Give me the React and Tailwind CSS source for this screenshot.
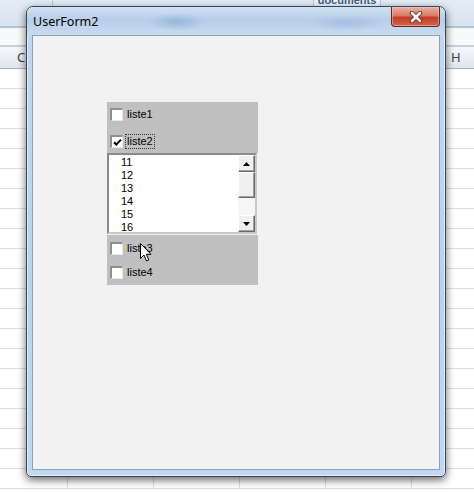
import React from "react";

function CheckBox({ checked }) {
  return (
    <div className="w-[13px] h-[13px] shrink-0 bg-white border-t-2 border-l-2 border-r border-b border-t-[#8f8f8f] border-l-[#8f8f8f] border-r-[#e6e6e6] border-b-[#e6e6e6] flex items-center justify-center">
      {checked && (
        <svg width="9" height="9" viewBox="0 0 9 9">
          <path d="M1 4.2 L3.3 6.6 L8 1.6" fill="none" stroke="#000" strokeWidth="2" />
        </svg>
      )}
    </div>
  );
}

function Opt({ label, checked, focus }) {
  return (
    <div className="flex items-center h-[13px]">
      <CheckBox checked={checked} />
      <span
        className={
          "ml-[2px] text-[11px] leading-[13px] text-black px-[1px] " +
          (focus ? "border border-dotted border-[#333]" : "border border-transparent")
        }
      >
        {label}
      </span>
    </div>
  );
}

function ScrollBtn({ up }) {
  return (
    <div className="h-[17px] w-full bg-[#f0f0f0] border border-t-white border-l-white border-r-[#696969] border-b-[#696969] shadow-[inset_-1px_-1px_0_#a0a0a0] flex items-center justify-center">
      <svg width="7" height="4" viewBox="0 0 7 4">
        {up ? <path d="M0 4 L3.5 0 L7 4 Z" fill="#000" /> : <path d="M0 0 L3.5 4 L7 0 Z" fill="#000" />}
      </svg>
    </div>
  );
}

export default function App() {
  const cols = [68, 86, 86, 86, 86, 86];
  const rows = Array.from({ length: 21 });
  const items = ["11", "12", "13", "14", "15", "16"];
  return (
    <div className="relative w-[474px] h-[492px] overflow-hidden bg-white font-['Liberation_Sans',Arial,sans-serif]">
      {/* Excel background */}
      <div className="flex flex-col w-full h-full">
        <div className="h-[28px] shrink-0 flex bg-[linear-gradient(180deg,#e4ecf6,#d9e4f1)] border-b-2 border-[#b3c4d8]">
          <div className="w-[53px] border-r border-[#b9c7d8]" />
          <div className="w-[260px]" />
          <div className="w-[68px] h-[12px] border-x border-b border-[#b9c7d8] bg-[#eef3f9] flex justify-center overflow-hidden">
            <span className="text-[11px] leading-[11px] -mt-[5px] text-[#3d5f8c] font-bold">documents</span>
          </div>
        </div>
        <div className="h-[19px] shrink-0 bg-[#f7f9fb] border-b-2 border-[#c3cfdc]" />
        <div className="h-[22px] shrink-0 flex bg-[linear-gradient(180deg,#f6f8fb,#dfe6ee)] border-b border-[#9fb1c5]">
          {cols.map((w, i) => (
            <div
              key={i}
              style={{ width: w }}
              className="shrink-0 h-full border-r border-[#c6d0db] flex items-center text-[13px] text-[#3f3f3f] font-['Noto_Sans',sans-serif]"
            >
              {i === 0 && <span className="pl-[17px]">C</span>}
              {i === 5 && <span className="pl-[39px]">H</span>}
            </div>
          ))}
        </div>
        {rows.map((_, r) => (
          <div key={r} className="h-[20px] shrink-0 flex border-b border-[#dcdee2]">
            {cols.map((w, i) => (
              <div key={i} style={{ width: w }} className="shrink-0 h-full border-r border-[#dcdee2]" />
            ))}
          </div>
        ))}
      </div>

      {/* Window */}
      <div className="absolute left-[26px] top-[6px] w-[420px] h-[471px] rounded-t-[7px] rounded-b-[5px] border border-[#34475c] bg-[linear-gradient(180deg,#c3d8ef,#bad2ec_60%,#c2d8f0)] shadow-[0_3px_9px_rgba(0,0,0,0.6),inset_0_0_0_1px_rgba(255,255,255,0.55)] flex flex-col">
        <div className="h-[28px] shrink-0 flex items-start rounded-t-[6px] bg-[radial-gradient(ellipse_30px_9px_at_150px_15px,rgba(125,160,205,0.55),transparent),radial-gradient(ellipse_40px_8px_at_320px_16px,rgba(140,170,210,0.45),transparent),linear-gradient(180deg,#cfe1f3_0%,#b8cfe9_45%,#c8dbf0_100%)]">
          <span className="pl-[6px] pt-[6px] text-[12.5px] leading-[17px] text-black font-['Noto_Sans',sans-serif]">
            UserForm2
          </span>
          <div className="ml-auto mr-[5px] w-[49px] h-[20px] rounded-b-[4px] border border-t-0 border-[#5a2920] bg-[linear-gradient(180deg,#eab0a3_0%,#dc7a66_45%,#c43e28_55%,#d6624a_100%)] shadow-[inset_0_0_0_1px_rgba(255,200,190,0.5)] flex items-center justify-center">
            <svg width="14" height="12" viewBox="0 0 14 12">
              <path d="M3 2 L11 10 M11 2 L3 10" stroke="#5b2a22" strokeWidth="4.5" strokeLinecap="round" />
              <path d="M3 2 L11 10 M11 2 L3 10" stroke="#fff" strokeWidth="2.6" strokeLinecap="round" />
            </svg>
          </div>
        </div>
        <div className="flex-1 mx-[5px] mb-[6px] border border-[#8c9fb6] bg-[#f2f2f2] pl-[74px] pt-[66px]">
          <div className="w-[151px] flex flex-col">
            <div className="h-[51px] bg-[#c0c0c0] pl-[3px] pt-[6px] flex flex-col gap-[14px]">
              <Opt label="liste1" />
              <Opt label="liste2" checked focus />
            </div>
            <div className="h-[81px] w-[150px] bg-white border-2 border-t-[#8a8a8a] border-l-[#8a8a8a] border-r-[#c8c8c8] border-b-[#c8c8c8] flex">
              <div className="flex-1 pl-[12px] pt-[1px] text-[11px] leading-[13px] text-black">
                {items.map((t) => (
                  <div key={t}>{t}</div>
                ))}
              </div>
              <div className="w-[17px] flex flex-col bg-[#f6f6f6]">
                <ScrollBtn up />
                <div className="h-[26px] bg-[#f0f0f0] border border-t-white border-l-white border-r-[#696969] border-b-[#696969] shadow-[inset_-1px_-1px_0_#a0a0a0]" />
                <div className="flex-1" />
                <ScrollBtn />
              </div>
            </div>
            <div className="h-[1px]" />
            <div className="relative h-[50px] bg-[#c0c0c0] pl-[3px] pt-[7px] flex flex-col gap-[11px]">
              <Opt label="liste3" />
              <Opt label="liste4" />
              <svg className="absolute left-[33px] top-[8px]" width="13" height="20" viewBox="0 0 13 20">
                <path
                  d="M0.5 0.5 L0.5 15.5 L4 12 L6.5 18 L8.8 17 L6.3 11.3 L11 11.3 Z"
                  fill="#fff"
                  stroke="#000"
                  strokeWidth="1"
                  strokeLinejoin="miter"
                />
              </svg>
            </div>
          </div>
        </div>
      </div>
    </div>
  );
}
